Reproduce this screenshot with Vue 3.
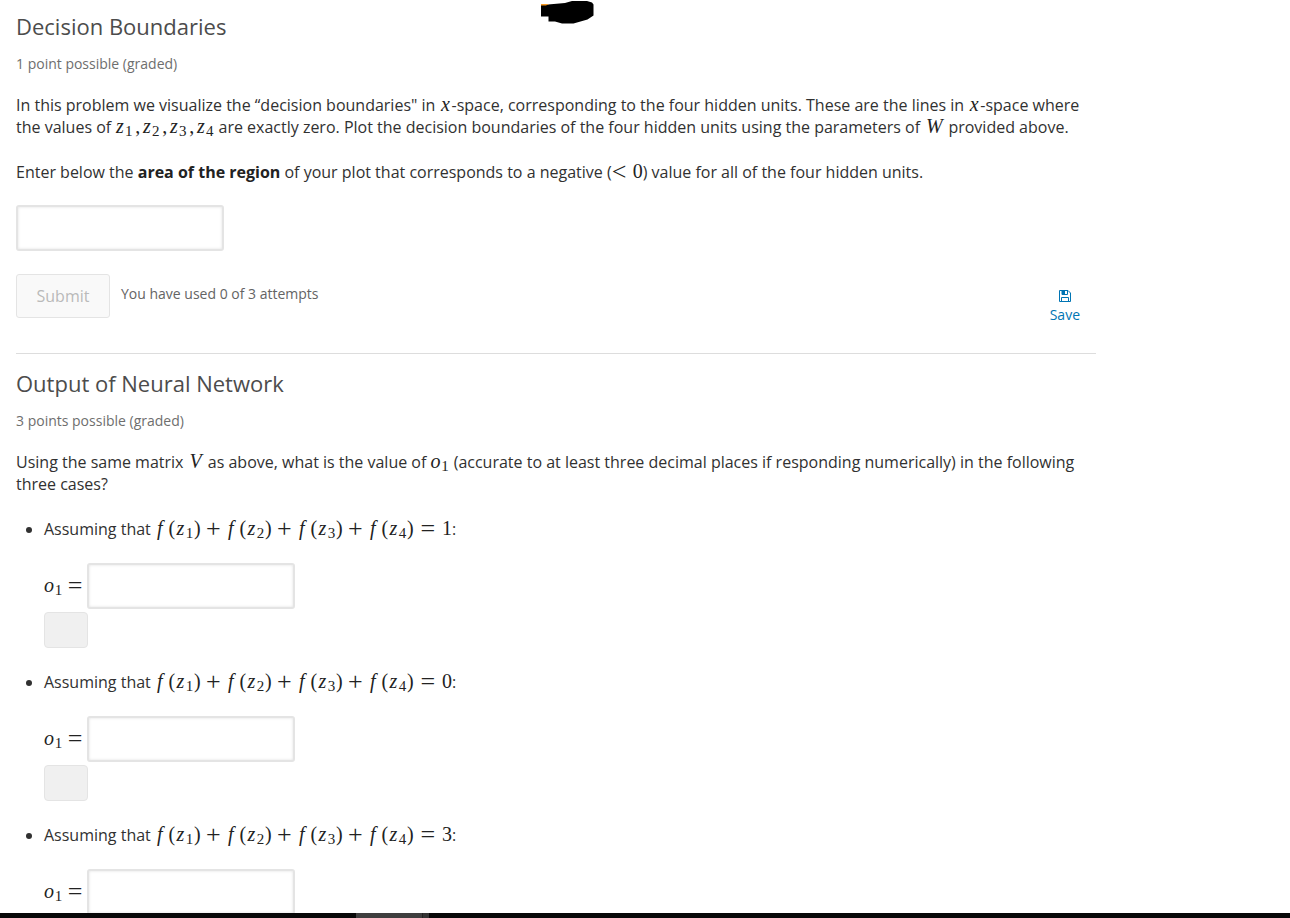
<script setup>
import { ref } from 'vue'

const area = ref('')
const cases = ref([
  { sum: 1, answer: '' },
  { sum: 0, answer: '' },
  { sum: 3, answer: '' }
])
</script>

<template>
  <div class="page">
    <svg class="scribble" viewBox="0 0 56 24" aria-hidden="true">
      <path d="M1 4.500h7l17-1.500 7-2h15l5 1.500 1.500 2v11l-6 4-14 4H22l-7-2H8.500v-5H1z" fill="#000" />
      <path d="M1 4h8l-3 1.500H1z" fill="#f79820" />
    </svg>

    <main class="content">
      <section class="problem">
        <h2>Decision Boundaries</h2>
        <p class="points">1 point possible (graded)</p>
        <p class="text">
          In this problem we visualize the “decision boundaries" in <span class="m"><i class="x">x</i></span>-space,
          corresponding to the four hidden units. These are the lines in <span class="m"><i class="x">x</i></span>-space
          where the values of
          <span class="m"><template v-for="n in 4" :key="n"><i class="z">z</i><span class="sub">{{ n }}</span><span v-if="n < 4" class="comma">,</span></template></span>
          are exactly zero. Plot the decision boundaries of the four hidden units using the parameters of
          <span class="m"><i class="cap-w">W</i></span> provided above.
        </p>
        <p class="text">
          <label for="area">Enter below the <strong>area of the region</strong> of your plot that corresponds to a negative
          (<span class="m"><span class="less">&lt;</span><span class="digit">0</span></span>) value for all of the four hidden units.</label>
        </p>
        <input id="area" v-model="area" class="answer" type="text" />
        <div class="actions">
          <button class="submit" type="button" disabled>Submit</button>
          <span class="attempts">You have used 0 of 3 attempts</span>
          <button class="save" type="button">
            <svg viewBox="0 0 12 12" aria-hidden="true">
              <path d="M.5.500h8.500l2.500 2.500v8.500H.5z M2.500 11.500V7.500h7v4 M3 .5v4h5.500v-4" fill="none" stroke="currentColor" />
              <path d="M3 1h3v3H3z" fill="currentColor" />
            </svg>
            <span>Save</span>
          </button>
        </div>
      </section>

      <section class="problem second">
        <h2>Output of Neural Network</h2>
        <p class="points">3 points possible (graded)</p>
        <p class="text">
          Using the same matrix <span class="m"><i class="cap-v">V</i></span> as above, what is the value of
          <span class="m"><i class="o">o</i><span class="sub">1</span></span>
          (accurate to at least three decimal places if responding numerically) in the following three cases?
        </p>
        <ul>
          <li v-for="(item, index) in cases" :key="index">
            <p class="case">
              Assuming that
              <span class="m"><template v-for="n in 4" :key="n"><i class="f">f</i><span class="open">(</span><i class="z">z</i><span class="sub">{{ n }}</span><span class="close">)</span><span v-if="n < 4" class="plus">+</span></template><span class="equals">=</span><span class="digit">{{ item.sum }}</span></span>:
            </p>
            <div class="row">
              <label :for="'output-' + index" class="m"><i class="o">o</i><span class="sub">1</span><span class="equals">=</span></label>
              <input :id="'output-' + index" v-model="item.answer" class="answer" type="text" />
            </div>
            <button class="status" type="button" aria-label="Answer status" disabled></button>
          </li>
        </ul>
      </section>
    </main>

    <div class="taskbar"><span class="thumb"></span><span class="edge"></span></div>
  </div>
</template>

<style>
html,
body {
  margin: 0;
  background: #fff;
}
</style>

<style scoped>
.page {
  position: relative;
  height: 100vh;
  overflow: hidden;
  font-family: "Open Sans", sans-serif;
  font-size: 16px;
  line-height: 22px;
  color: #313131;
}

.scribble {
  position: absolute;
  top: 0;
  left: 540px;
  width: 56px;
  height: 24px;
}

.content {
  max-width: 1080px;
  padding: 11px 16px 0;
}

.problem.second {
  margin-top: 28px;
  padding-top: 14px;
  border-top: 1px solid #ddd;
}

h2 {
  margin: 0;
  font-size: 22px;
  line-height: 30px;
  font-weight: 400;
  color: #4c4c4c;
}

.points {
  margin: 13px 0 20px;
  font-size: 14px;
  line-height: 20px;
  color: #6e6e6e;
}

.text {
  margin: 0 0 22px;
}

.text + .text {
  margin-top: 23px;
}

strong {
  font-weight: 700;
  color: #222;
}

.answer {
  display: block;
  box-sizing: border-box;
  width: 208px;
  height: 46px;
  padding: 0 12px;
  border: 2px solid #e4e4e4;
  border-radius: 3px;
  background: #fff;
  box-shadow: inset 0 0 3px rgba(0, 0, 0, 0.12);
  font: inherit;
  color: inherit;
}

.actions {
  display: flex;
  align-items: flex-start;
  margin-top: 23px;
  min-height: 51px;
}

.submit {
  box-sizing: border-box;
  width: 94px;
  height: 44px;
  padding: 0;
  border: 1px solid #e4e4e4;
  border-radius: 3px;
  background: #f9f9f9;
  font: inherit;
  color: #bababa;
}

.attempts {
  margin: 10px 0 0 11px;
  font-size: 14px;
  line-height: 20px;
  color: #646464;
}

.save {
  display: flex;
  flex-direction: column;
  align-items: center;
  gap: 3px;
  margin: 16px 16px 0 auto;
  padding: 0;
  border: 0;
  background: none;
  font: inherit;
  font-size: 14px;
  line-height: 20px;
  color: #0075b4;
}

.save svg {
  width: 12px;
  height: 12px;
}

ul {
  margin: 23px 0 0;
  padding-left: 28px;
}

li {
  margin-bottom: 23px;
}

.case {
  margin: 0 0 23px;
}

.row {
  display: flex;
  align-items: center;
}

.status {
  display: block;
  box-sizing: border-box;
  width: 44px;
  height: 36px;
  margin-top: 3px;
  padding: 0;
  border: 1px solid #e4e4e4;
  border-radius: 4px;
  background: #f0f0f0;
}

.m {
  display: inline-block;
  font-family: "Liberation Serif", serif;
  font-size: 20px;
  line-height: 16px;
  white-space: nowrap;
  color: #222;
}

.m > * {
  display: inline-block;
  line-height: 16px;
  text-align: center;
}

.m .o,
.m .digit {
  width: 10px;
}

.m .x {
  width: 12px;
}

.m .z {
  width: 9px;
}

.m .sub {
  width: 9px;
  font-size: 15px;
  line-height: 12px;
  vertical-align: -3px;
}

.m .comma {
  width: 9px;
  text-align: left;
  text-indent: 2px;
}

.m .cap-w {
  width: 20px;
}

.m .cap-v {
  width: 16px;
}

.m .f {
  width: 13px;
  text-align: left;
  text-indent: 2px;
}

.m .open {
  width: 8px;
}

.m .close {
  width: 7px;
}

.m .plus,
.m .equals,
.m .less {
  width: 25px;
  font-size: 26px;
  line-height: 12px;
  vertical-align: -2px;
}

.m .less {
  width: 21px;
  text-align: left;
}

.case .m .equals {
  width: 28px;
}

.row .m .equals {
  width: 24px;
}

.taskbar {
  position: absolute;
  right: 0;
  bottom: 0;
  left: 0;
  display: flex;
  height: 5px;
  padding-left: 356px;
  background: #080808;
}

.thumb {
  width: 66px;
  background: #3e3e3e;
}

.edge {
  width: 6px;
  border-left: 1px solid #222;
  background: #343434;
}
</style>
